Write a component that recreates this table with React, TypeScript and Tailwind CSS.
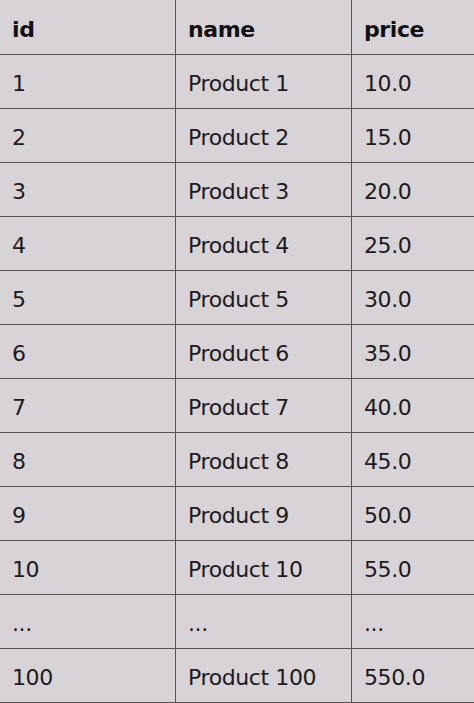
const rows: [string, string, string][] = [
  ['1', 'Product 1', '10.0'],
  ['2', 'Product 2', '15.0'],
  ['3', 'Product 3', '20.0'],
  ['4', 'Product 4', '25.0'],
  ['5', 'Product 5', '30.0'],
  ['6', 'Product 6', '35.0'],
  ['7', 'Product 7', '40.0'],
  ['8', 'Product 8', '45.0'],
  ['9', 'Product 9', '50.0'],
  ['10', 'Product 10', '55.0'],
  ['...', '...', '...'],
  ['100', 'Product 100', '550.0'],
];

function Row({ cells, head }: { cells: [string, string, string]; head?: boolean }) {
  return (
    <div
      className={'grid grid-cols-[176px_176px_1fr] border-b border-[#575457] ' + (head ? 'h-[55px]' : 'h-[54px]')}
    >
      {cells.map((c, i) => (
        <div
          key={i}
          className={
            'flex items-center pl-3 ' +
            (i < 2 ? 'border-r border-[#575457] ' : '') +
            (head ? 'pt-[5px] font-bold text-[#121012]' : 'pt-1 font-normal text-[#1c1a1c]')
          }
        >
          {c}
        </div>
      ))}
    </div>
  );
}

export default function App() {
  return (
    <div className="h-[703px] w-[474px] overflow-hidden bg-[#d8d3d7] text-[22px] leading-none tracking-[-0.4px] [font-family:'DejaVu_Sans',sans-serif]">
      <Row cells={['id', 'name', 'price']} head />
      {rows.map((r, i) => (
        <Row key={i} cells={r} />
      ))}
    </div>
  );
}
